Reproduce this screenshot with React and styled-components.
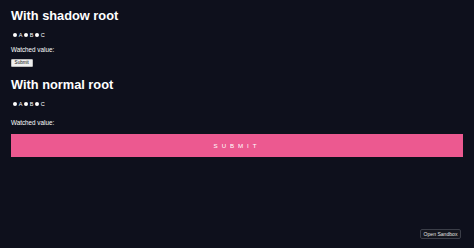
import React, { useState } from 'react';
import styled, { createGlobalStyle } from 'styled-components';

const GlobalStyle = createGlobalStyle`
	html, body {
		margin: 0;
		padding: 0;
		min-height: 100%;
		background: #0e101c;
	}

	body {
		min-height: 100vh;
		font-family: "Liberation Sans", Arial, sans-serif;
		color: #fff;
	}
`;

const Page = styled.div`
	padding: 8px 11px 0;
`;

const Form = styled.form`
	display: flex;
	flex-direction: column;
	align-items: flex-start;
`;

const Heading = styled.h2`
	margin: ${(props) => props.$top || 0}px 0 0;
	font-size: 12.8px;
	line-height: 15px;
	font-weight: 700;
	color: #fff;
`;

const RadioRow = styled.div`
	margin-top: ${(props) => props.$top}px;
	height: 9px;
	display: flex;
	align-items: center;
	font-size: 5.5px;
	color: #fff;
`;

const RadioLabel = styled.label`
	display: inline-flex;
	align-items: center;
`;

const Radio = styled.input`
	appearance: none;
	width: 4px;
	height: 4px;
	margin: 0 1.8px 0 1.5px;
	border: none;
	border-radius: 50%;
	background: #fff;

	${RadioLabel}:first-child & {
		margin-left: 2px;
	}
`;

const WatchedText = styled.p`
	margin: ${(props) => props.$top}px 0 0;
	font-size: 6.3px;
	line-height: 8px;
	color: #fff;
`;

const SmallButton = styled.button`
	margin-top: 5.5px;
	height: 8px;
	padding: 0 2.6px;
	border: 1px solid #bdbdbd;
	border-radius: 1px;
	background: #efefef;
	color: #111;
	font-family: "Liberation Sans", Arial, sans-serif;
	font-size: 4.6px;
	line-height: 6px;
`;

const BigButton = styled.button`
	margin-top: 7.5px;
	width: 100%;
	height: 23px;
	border: none;
	background: #ec5990;
	color: #fff;
	font-family: "Liberation Sans", Arial, sans-serif;
	font-size: 6.2px;
	letter-spacing: 3.9px;
	text-transform: uppercase;
`;

const SandboxButton = styled.button`
	position: fixed;
	right: 13px;
	bottom: 9px;
	height: 10px;
	padding: 0 2.5px;
	border: 1px solid #3b3e48;
	border-radius: 2px;
	background: #14161e;
	color: #e2e2e2;
	font-family: "Liberation Sans", Arial, sans-serif;
	font-size: 5.1px;
	line-height: 8px;
`;

const options = ['A', 'B', 'C'];

const RadioGroup = ({ name, top, value, onChange }) => (
	<RadioRow $top={top}>
		{options.map((opt) => (
			<RadioLabel key={opt}>
				<Radio
					type="radio"
					name={name}
					value={opt}
					checked={value === opt}
					onChange={() => onChange(opt)}
				/>
				{opt}
			</RadioLabel>
		))}
	</RadioRow>
);

const App = () => {
	const [shadowValue, setShadowValue] = useState('');
	const [normalValue, setNormalValue] = useState('');

	return (
		<>
			<GlobalStyle />
			<Page>
				<Form onSubmit={(e) => e.preventDefault()}>
					<Heading>With shadow root</Heading>
					<RadioGroup name="shadow" top={7} value={shadowValue} onChange={setShadowValue} />
					<WatchedText $top={6.5}>Watched value: {shadowValue}</WatchedText>
					<SmallButton type="submit">Submit</SmallButton>

					<Heading $top={10}>With normal root</Heading>
					<RadioGroup name="normal" top={7.5} value={normalValue} onChange={setNormalValue} />
					<WatchedText $top={10}>Watched value: {normalValue}</WatchedText>
					<BigButton type="submit">Submit</BigButton>
				</Form>
			</Page>
			<SandboxButton type="button">Open Sandbox</SandboxButton>
		</>
	);
};

export default App;
